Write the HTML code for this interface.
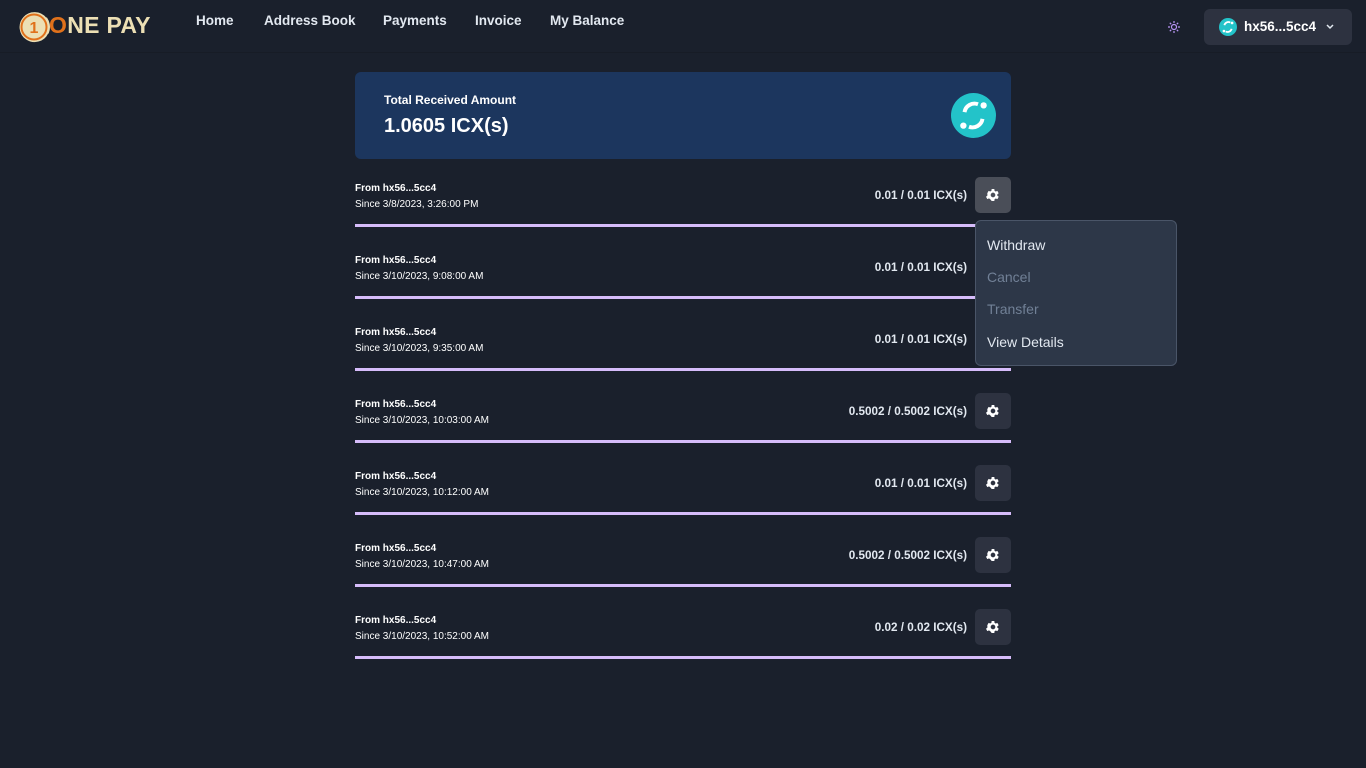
<!DOCTYPE html>
<html><head><meta charset="utf-8"><style>
*{box-sizing:border-box;margin:0;padding:0}
body{width:1366px;height:768px;background:#1a202c;font-family:"Liberation Sans",sans-serif;color:#fff;position:relative;overflow:hidden}
.hdr{position:absolute;left:0;top:0;width:1366px;height:53px;border-bottom:1px solid #171c26;background:#1a202c}
.nav a{position:absolute;top:13px;font-size:13.5px;font-weight:bold;color:#e2e8f0;text-decoration:none}
.logo{position:absolute;left:16px;top:9px}
.logotext{position:absolute;left:49px;top:12px;font-size:23px;font-weight:bold;color:#ecdfb4;letter-spacing:0.3px}
.wallet{position:absolute;left:1204px;top:9px;width:148px;height:36px;background:#2d3240;border-radius:6px}
.card{position:absolute;left:355px;top:72px;width:656px;height:87px;background:#1c365e;border-radius:6px}
.row{position:absolute;left:355px;width:656px;height:72px}
.row .t{position:absolute;left:0;top:6px;font-size:10px;font-weight:bold;color:#fff}
.row .s{position:absolute;left:0;top:22px;font-size:10px;color:#fff}
.row .a{position:absolute;right:44px;top:12px;font-size:11.7px;font-weight:bold;color:#e2e8f0}
.row .g{position:absolute;right:0;top:0;width:36px;height:36px;background:#2d3240;border-radius:5px;display:flex;align-items:center;justify-content:center}
.row .b{position:absolute;left:0;top:47px;width:656px;height:3px;background:#d6bcfa}
.menu{position:absolute;left:975px;top:220px;width:202px;height:146px;background:#2d3748;border:1px solid #4a5568;border-radius:6px}
.menu div{position:absolute;left:11px;font-size:14px}
</style></head><body>
<div class="hdr">
<svg class="logo" width="36" height="36" viewBox="0 0 36 36"><circle cx="18" cy="18" r="16" fill="#ecdfb4"/><path d="M31 8 A16 16 0 1 0 33 25" fill="none" stroke="#1a202c" stroke-width="2"/><circle cx="18" cy="18" r="12.5" fill="#ecdfb4" stroke="#e0711b" stroke-width="2"/><text x="18" y="24" text-anchor="middle" font-family="Liberation Sans" font-weight="bold" font-size="16" fill="#e0711b">1</text></svg>
<div class="logotext"><span style="color:#e0711b">O</span>NE PAY</div>
<div class="nav"><a style="left:196px">Home</a><a style="left:264px">Address Book</a><a style="left:383px">Payments</a><a style="left:475px">Invoice</a><a style="left:550px">My Balance</a></div>
<svg style="position:absolute;left:1167px;top:20px" width="14" height="14" viewBox="0 0 14 14" stroke="#b794f4" stroke-width="1.2" fill="none"><circle cx="7" cy="7" r="2.5"/><path d="M7 1v2M7 11v2M1 7h2M11 7h2M2.8 2.8l1.4 1.4M9.8 9.8l1.4 1.4M2.8 11.2l1.4-1.4M9.8 4.2l1.4-1.4"/></svg>
<div class="wallet">
<svg style="position:absolute;left:15px;top:9px" width="18" height="18" viewBox="0 0 40 40"><circle cx="20" cy="20" r="20" fill="#23c3c9"/><path d="M12 16a9 9 0 0 1 13-6M28 24a9 9 0 0 1-13 6" stroke="#fff" stroke-width="4" fill="none"/><circle cx="29" cy="11" r="3" fill="#fff"/><circle cx="11" cy="29" r="3" fill="#fff"/></svg>
<div style="position:absolute;left:40px;top:10px;font-size:13.5px;font-weight:bold">hx56...5cc4</div>
<svg style="position:absolute;left:121px;top:14px" width="10" height="8" viewBox="0 0 10 8"><path d="M2 2l3 3 3-3" stroke="#e2e8f0" stroke-width="1.5" fill="none"/></svg>
</div>
</div>
<div class="card">
<div style="position:absolute;left:29px;top:21px;font-size:12px;font-weight:bold">Total Received Amount</div>
<div style="position:absolute;left:29px;top:43px;font-size:20px;font-weight:bold">1.0605 ICX(s)</div>
<svg style="position:absolute;left:596px;top:21px" width="45" height="45" viewBox="0 0 40 40"><circle cx="20" cy="20" r="20" fill="#23c3c9"/><path d="M12 17a9 9 0 0 1 12-7M28 23a9 9 0 0 1-12 7" stroke="#fff" stroke-width="3.5" fill="none"/><circle cx="29" cy="11" r="2.8" fill="#fff"/><circle cx="11" cy="29" r="2.8" fill="#fff"/></svg>
</div>

<div class="row" style="top:177px"><div class="t">From hx56...5cc4</div><div class="s">Since 3/8/2023, 3:26:00 PM</div><div class="a">0.01 / 0.01 ICX(s)</div><div class="g" style="background:#4a4e58"><svg width="16" height="16" viewBox="0 0 24 24"><path fill="#fff" d="M19.4 13a7.5 7.5 0 0 0 0-2l2.1-1.6-2-3.5-2.5 1a7 7 0 0 0-1.7-1L15 3h-4l-.4 2.8a7 7 0 0 0-1.7 1l-2.5-1-2 3.5L4.6 11a7.5 7.5 0 0 0 0 2l-2.1 1.6 2 3.5 2.5-1a7 7 0 0 0 1.7 1L11 21h4l.4-2.8a7 7 0 0 0 1.7-1l2.5 1 2-3.5zM13 15.5a3.5 3.5 0 1 1 0-7 3.5 3.5 0 0 1 0 7z" transform="translate(-1 0)"/></svg></div><div class="b"></div></div>
<div class="row" style="top:249px"><div class="t">From hx56...5cc4</div><div class="s">Since 3/10/2023, 9:08:00 AM</div><div class="a">0.01 / 0.01 ICX(s)</div><div class="b"></div></div>
<div class="row" style="top:321px"><div class="t">From hx56...5cc4</div><div class="s">Since 3/10/2023, 9:35:00 AM</div><div class="a">0.01 / 0.01 ICX(s)</div><div class="b"></div></div>
<div class="row" style="top:393px"><div class="t">From hx56...5cc4</div><div class="s">Since 3/10/2023, 10:03:00 AM</div><div class="a">0.5002 / 0.5002 ICX(s)</div><div class="g"><svg width="16" height="16" viewBox="0 0 24 24"><path fill="#fff" d="M19.4 13a7.5 7.5 0 0 0 0-2l2.1-1.6-2-3.5-2.5 1a7 7 0 0 0-1.7-1L15 3h-4l-.4 2.8a7 7 0 0 0-1.7 1l-2.5-1-2 3.5L4.6 11a7.5 7.5 0 0 0 0 2l-2.1 1.6 2 3.5 2.5-1a7 7 0 0 0 1.7 1L11 21h4l.4-2.8a7 7 0 0 0 1.7-1l2.5 1 2-3.5zM13 15.5a3.5 3.5 0 1 1 0-7 3.5 3.5 0 0 1 0 7z" transform="translate(-1 0)"/></svg></div><div class="b"></div></div>
<div class="row" style="top:465px"><div class="t">From hx56...5cc4</div><div class="s">Since 3/10/2023, 10:12:00 AM</div><div class="a">0.01 / 0.01 ICX(s)</div><div class="g"><svg width="16" height="16" viewBox="0 0 24 24"><path fill="#fff" d="M19.4 13a7.5 7.5 0 0 0 0-2l2.1-1.6-2-3.5-2.5 1a7 7 0 0 0-1.7-1L15 3h-4l-.4 2.8a7 7 0 0 0-1.7 1l-2.5-1-2 3.5L4.6 11a7.5 7.5 0 0 0 0 2l-2.1 1.6 2 3.5 2.5-1a7 7 0 0 0 1.7 1L11 21h4l.4-2.8a7 7 0 0 0 1.7-1l2.5 1 2-3.5zM13 15.5a3.5 3.5 0 1 1 0-7 3.5 3.5 0 0 1 0 7z" transform="translate(-1 0)"/></svg></div><div class="b"></div></div>
<div class="row" style="top:537px"><div class="t">From hx56...5cc4</div><div class="s">Since 3/10/2023, 10:47:00 AM</div><div class="a">0.5002 / 0.5002 ICX(s)</div><div class="g"><svg width="16" height="16" viewBox="0 0 24 24"><path fill="#fff" d="M19.4 13a7.5 7.5 0 0 0 0-2l2.1-1.6-2-3.5-2.5 1a7 7 0 0 0-1.7-1L15 3h-4l-.4 2.8a7 7 0 0 0-1.7 1l-2.5-1-2 3.5L4.6 11a7.5 7.5 0 0 0 0 2l-2.1 1.6 2 3.5 2.5-1a7 7 0 0 0 1.7 1L11 21h4l.4-2.8a7 7 0 0 0 1.7-1l2.5 1 2-3.5zM13 15.5a3.5 3.5 0 1 1 0-7 3.5 3.5 0 0 1 0 7z" transform="translate(-1 0)"/></svg></div><div class="b"></div></div>
<div class="row" style="top:609px"><div class="t">From hx56...5cc4</div><div class="s">Since 3/10/2023, 10:52:00 AM</div><div class="a">0.02 / 0.02 ICX(s)</div><div class="g"><svg width="16" height="16" viewBox="0 0 24 24"><path fill="#fff" d="M19.4 13a7.5 7.5 0 0 0 0-2l2.1-1.6-2-3.5-2.5 1a7 7 0 0 0-1.7-1L15 3h-4l-.4 2.8a7 7 0 0 0-1.7 1l-2.5-1-2 3.5L4.6 11a7.5 7.5 0 0 0 0 2l-2.1 1.6 2 3.5 2.5-1a7 7 0 0 0 1.7 1L11 21h4l.4-2.8a7 7 0 0 0 1.7-1l2.5 1 2-3.5zM13 15.5a3.5 3.5 0 1 1 0-7 3.5 3.5 0 0 1 0 7z" transform="translate(-1 0)"/></svg></div><div class="b"></div></div>

<div class="menu">
<div style="top:16px;color:#e2e8f0">Withdraw</div>
<div style="top:48px;color:#718096">Cancel</div>
<div style="top:80px;color:#718096">Transfer</div>
<div style="top:113px;color:#e2e8f0">View Details</div>
</div>
</body></html>
